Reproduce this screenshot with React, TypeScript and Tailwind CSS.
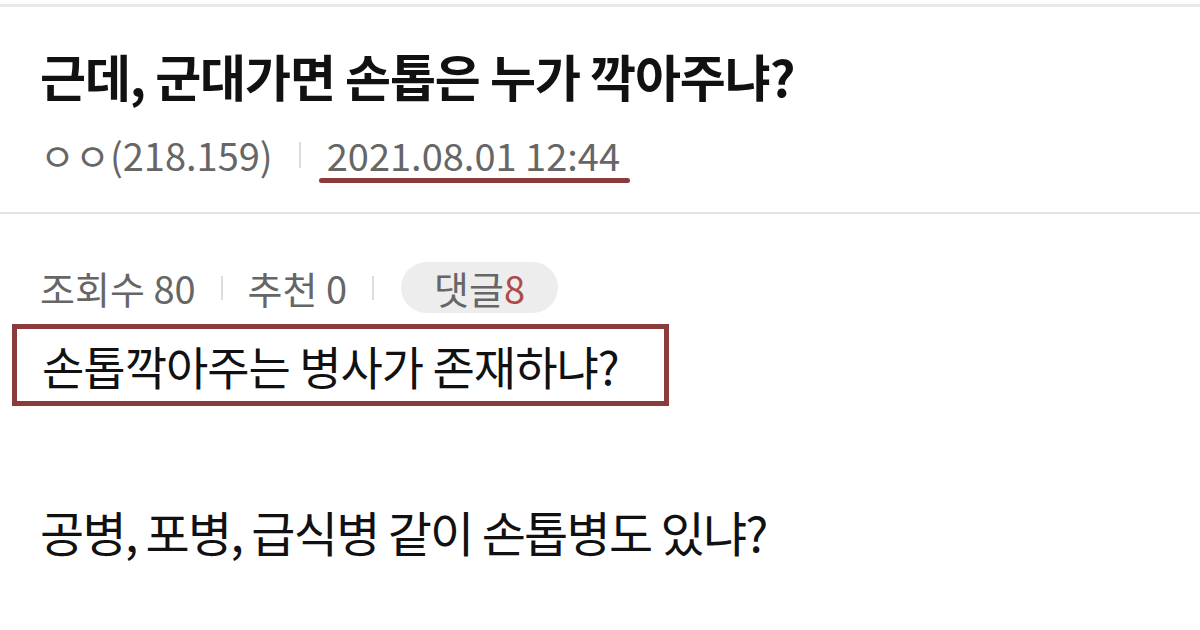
export default function App() {
  return (
    <div
      className="w-[1200px] h-[630px] overflow-hidden bg-white text-[#111]"
      style={{ fontFamily: '"Noto Sans CJK KR", "Noto Sans", sans-serif' }}
    >
      <div className="h-[4px]" />
      <div className="border-t-[3px] border-[#e8e8e8]" />

      {/* Header */}
      <div className="px-[40px] pt-[38px] pb-[35px]">
        <h1 className="text-[50px] leading-[60px] font-bold tracking-[-1.1px]">
          근데, 군대가면 손톱은 누가 깍아주냐?
        </h1>
        <div className="mt-[28px] flex items-center text-[38px] leading-[44px] text-[#666]">
          <span>ㅇㅇ(218.159)</span>
          <span className="mx-[26px] h-[26px] w-[2px] bg-[#ddd]" />
          <span className="relative">
            2021.08.01 12:44
            <span className="absolute left-[-8px] right-[-10px] bottom-[-6px] h-[5px] rounded-full bg-[#8c3b3d]" />
          </span>
        </div>
      </div>

      <div className="border-t-[2px] border-[#e3e3e3]" />

      {/* Stats */}
      <div className="px-[40px] pt-[48px] flex items-center text-[38px] leading-[50px] text-[#666]">
        <span>조회수 80</span>
        <span className="mx-[25px] h-[24px] w-[2px] bg-[#ddd]" />
        <span>추천 0</span>
        <span className="ml-[25px] mr-[27px] h-[24px] w-[2px] bg-[#ddd]" />
        <span className="rounded-full bg-[#ededed] px-[33px] leading-[51px]">
          댓글<span className="text-[#b04a4a]">8</span>
        </span>
      </div>

      {/* Highlighted line */}
      <div className="ml-[12px] mt-[11px] w-[657px] h-[82px] border-[5px] border-[#8c3b3d] flex items-center pl-[25px]">
        <span className="text-[46px] tracking-[-1px]">손톱깍아주는 병사가 존재하냐?</span>
      </div>

      <div className="px-[40px] pt-[97px]">
        <p className="text-[48px] leading-[56px] tracking-[-1.7px]">공병, 포병, 급식병 같이 손톱병도 있냐?</p>
      </div>
    </div>
  )
}
